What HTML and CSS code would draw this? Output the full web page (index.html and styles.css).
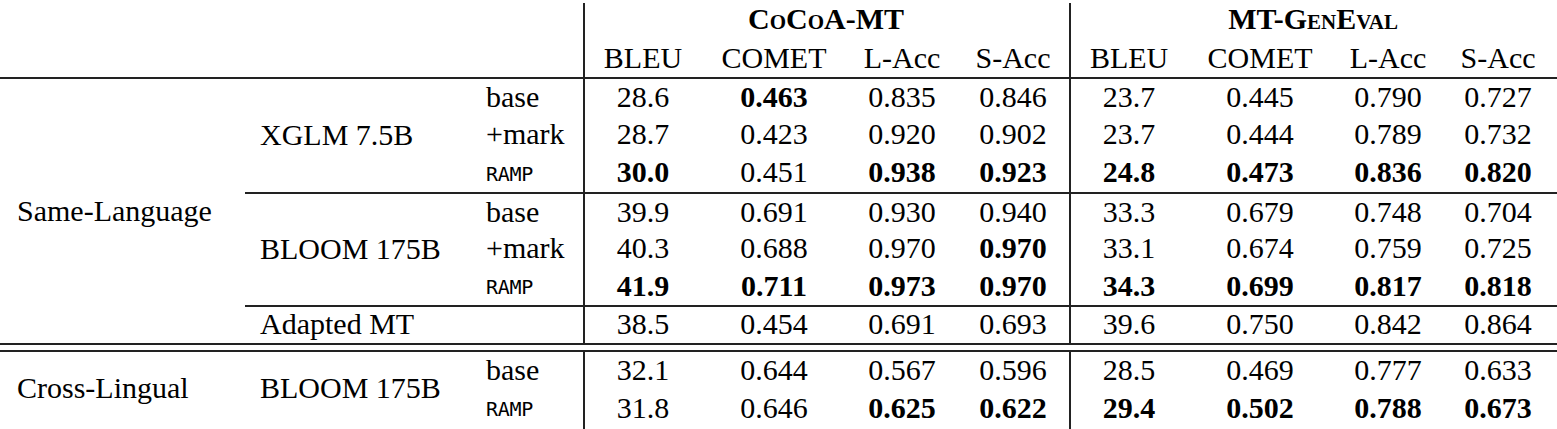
FILE: index.html
```html
<!DOCTYPE html>
<html lang="en">
<head>
<meta charset="utf-8">
<title>Results table</title>
<link rel="stylesheet" href="styles.css">
</head>
<body>
<table class="results">
  <colgroup>
    <col class="c-setting">
    <col class="c-model">
    <col class="c-method">
    <col class="c-bleu">
    <col class="c-comet">
    <col class="c-lacc">
    <col class="c-sacc">
    <col class="c-bleu">
    <col class="c-comet">
    <col class="c-lacc">
    <col class="c-sacc-last">
  </colgroup>
  <thead>
    <tr class="h1">
      <th></th><th></th><th></th>
      <th colspan="4" class="grp">CoCoA-MT</th>
      <th colspan="4" class="grp">MT-GenEval</th>
    </tr>
    <tr class="h2">
      <th></th><th></th><th></th>
      <th class="vl">BLEU</th><th>COMET</th><th>L-Acc</th><th>S-Acc</th>
      <th class="vl">BLEU</th><th>COMET</th><th>L-Acc</th><th class="last">S-Acc</th>
    </tr>
  </thead>
  <tbody>
    <tr class="r g1a">
      <td rowspan="7" class="setting end">Same-Language</td>
      <td rowspan="3" class="model end">XGLM 7.5B</td>
      <td class="method">base</td>
      <td class="vl">28.6</td><td class="b">0.463</td><td>0.835</td><td>0.846</td>
      <td class="vl">23.7</td><td>0.445</td><td>0.790</td><td class="last">0.727</td>
    </tr>
    <tr class="r g1b">
      <td class="method">+mark</td>
      <td class="vl">28.7</td><td>0.423</td><td>0.920</td><td>0.902</td>
      <td class="vl">23.7</td><td>0.444</td><td>0.789</td><td class="last">0.732</td>
    </tr>
    <tr class="r g1c">
      <td class="method end"><span class="tt">RAMP</span></td>
      <td class="vl end b">30.0</td><td class="end">0.451</td><td class="end b">0.938</td><td class="end b">0.923</td>
      <td class="vl end b">24.8</td><td class="end b">0.473</td><td class="end b">0.836</td><td class="end b last">0.820</td>
    </tr>
    <tr class="r g2a">
      <td rowspan="3" class="model end">BLOOM 175B</td>
      <td class="method">base</td>
      <td class="vl">39.9</td><td>0.691</td><td>0.930</td><td>0.940</td>
      <td class="vl">33.3</td><td>0.679</td><td>0.748</td><td class="last">0.704</td>
    </tr>
    <tr class="r g2b">
      <td class="method">+mark</td>
      <td class="vl">40.3</td><td>0.688</td><td>0.970</td><td class="b">0.970</td>
      <td class="vl">33.1</td><td>0.674</td><td>0.759</td><td class="last">0.725</td>
    </tr>
    <tr class="r g2c">
      <td class="method end"><span class="tt">RAMP</span></td>
      <td class="vl end b">41.9</td><td class="end b">0.711</td><td class="end b">0.973</td><td class="end b">0.970</td>
      <td class="vl end b">34.3</td><td class="end b">0.699</td><td class="end b">0.817</td><td class="end b last">0.818</td>
    </tr>
    <tr class="r adapted">
      <td class="model end">Adapted MT</td>
      <td class="method end"></td>
      <td class="vl end">38.5</td><td class="end">0.454</td><td class="end">0.691</td><td class="end">0.693</td>
      <td class="vl end">39.6</td><td class="end">0.750</td><td class="end">0.842</td><td class="end last">0.864</td>
    </tr>
    <tr class="gap">
      <td colspan="11" class="gapcell"></td>
    </tr>
    <tr class="r x1">
      <td rowspan="2" class="setting xspan">Cross-Lingual</td>
      <td rowspan="2" class="model xspan">BLOOM 175B</td>
      <td class="method">base</td>
      <td class="vl">32.1</td><td>0.644</td><td>0.567</td><td>0.596</td>
      <td class="vl">28.5</td><td>0.469</td><td>0.777</td><td class="last">0.633</td>
    </tr>
    <tr class="r x2">
      <td class="method"><span class="tt">RAMP</span></td>
      <td class="vl">31.8</td><td>0.646</td><td class="b">0.625</td><td class="b">0.622</td>
      <td class="vl b">29.4</td><td class="b">0.502</td><td class="b">0.788</td><td class="b last">0.673</td>
    </tr>
  </tbody>
</table>
</body>
</html>
```

FILE: styles.css
```css
html, body {
  margin: 0;
  padding: 0;
  background: #ffffff;
}

body {
  color: #000;
  font-family: "Liberation Serif", "Times New Roman", Tinos, "DejaVu Serif", serif;
  font-size: 30px;
}

.results {
  border-collapse: separate;
  border-spacing: 0;
  table-layout: fixed;
  width: 1557px;
  font-family: "Liberation Serif", "Times New Roman", Tinos, "DejaVu Serif", serif;
  font-size: 30px;
}

.c-setting { width: 245px; }
.c-model { width: 225px; }
.c-method { width: 113px; }
.c-bleu { width: 118px; }
.c-comet { width: 146px; }
.c-lacc { width: 110px; }
.c-sacc { width: 112px; }
.c-sacc-last { width: 114px; }

.results th,
.results td {
  padding: 0 0 1px 0;
  font-family: "Liberation Serif", "Times New Roman", Tinos, "DejaVu Serif", serif;
  font-size: 30px;
  font-weight: 400;
  line-height: 34px;
  white-space: nowrap;
  vertical-align: middle;
  text-align: center;
}

.results .last {
  padding-right: 4px;
}

/* header */
.h1 { height: 40px; }
.h2 { height: 39px; }

.results .grp {
  font-weight: 700;
  font-variant: small-caps;
  padding-bottom: 3px;
  background: linear-gradient(#222, #222) no-repeat 0 3px / 2px 100%;
}

.h2 th {
  border-bottom: 2px solid #222;
}

/* rows */
.g1a, .g1b { height: 37px; }
.g1c { height: 41px; }
.g2a { height: 36px; }
.g2b { height: 37px; }
.g2c { height: 40px; }
.adapted { height: 38px; }
.gap { height: 7px; }
.x1 { height: 37px; }
.x2 { height: 40px; }

.results .x2 td { padding-bottom: 4px; }
.results .adapted td { padding-bottom: 2px; }

.results .setting {
  text-align: left;
  padding-left: 17px;
}

.results .model {
  text-align: left;
  padding-left: 15px;
}

.results .method {
  text-align: left;
  padding-left: 16px;
}

.results .xspan {
  padding-bottom: 6px;
}

.vl {
  border-left: 2px solid #222;
}

.end {
  border-bottom: 2px solid #222;
}

.results .gapcell {
  padding: 0;
  line-height: 0;
  font-size: 0;
  border-bottom: 2px solid #222;
}

.results .b {
  font-weight: 700;
}

.results .tt {
  font-family: "DejaVu Sans Mono", "Liberation Mono", monospace;
  font-size: 20px;
  font-weight: 400;
  letter-spacing: -0.3px;
}
```
